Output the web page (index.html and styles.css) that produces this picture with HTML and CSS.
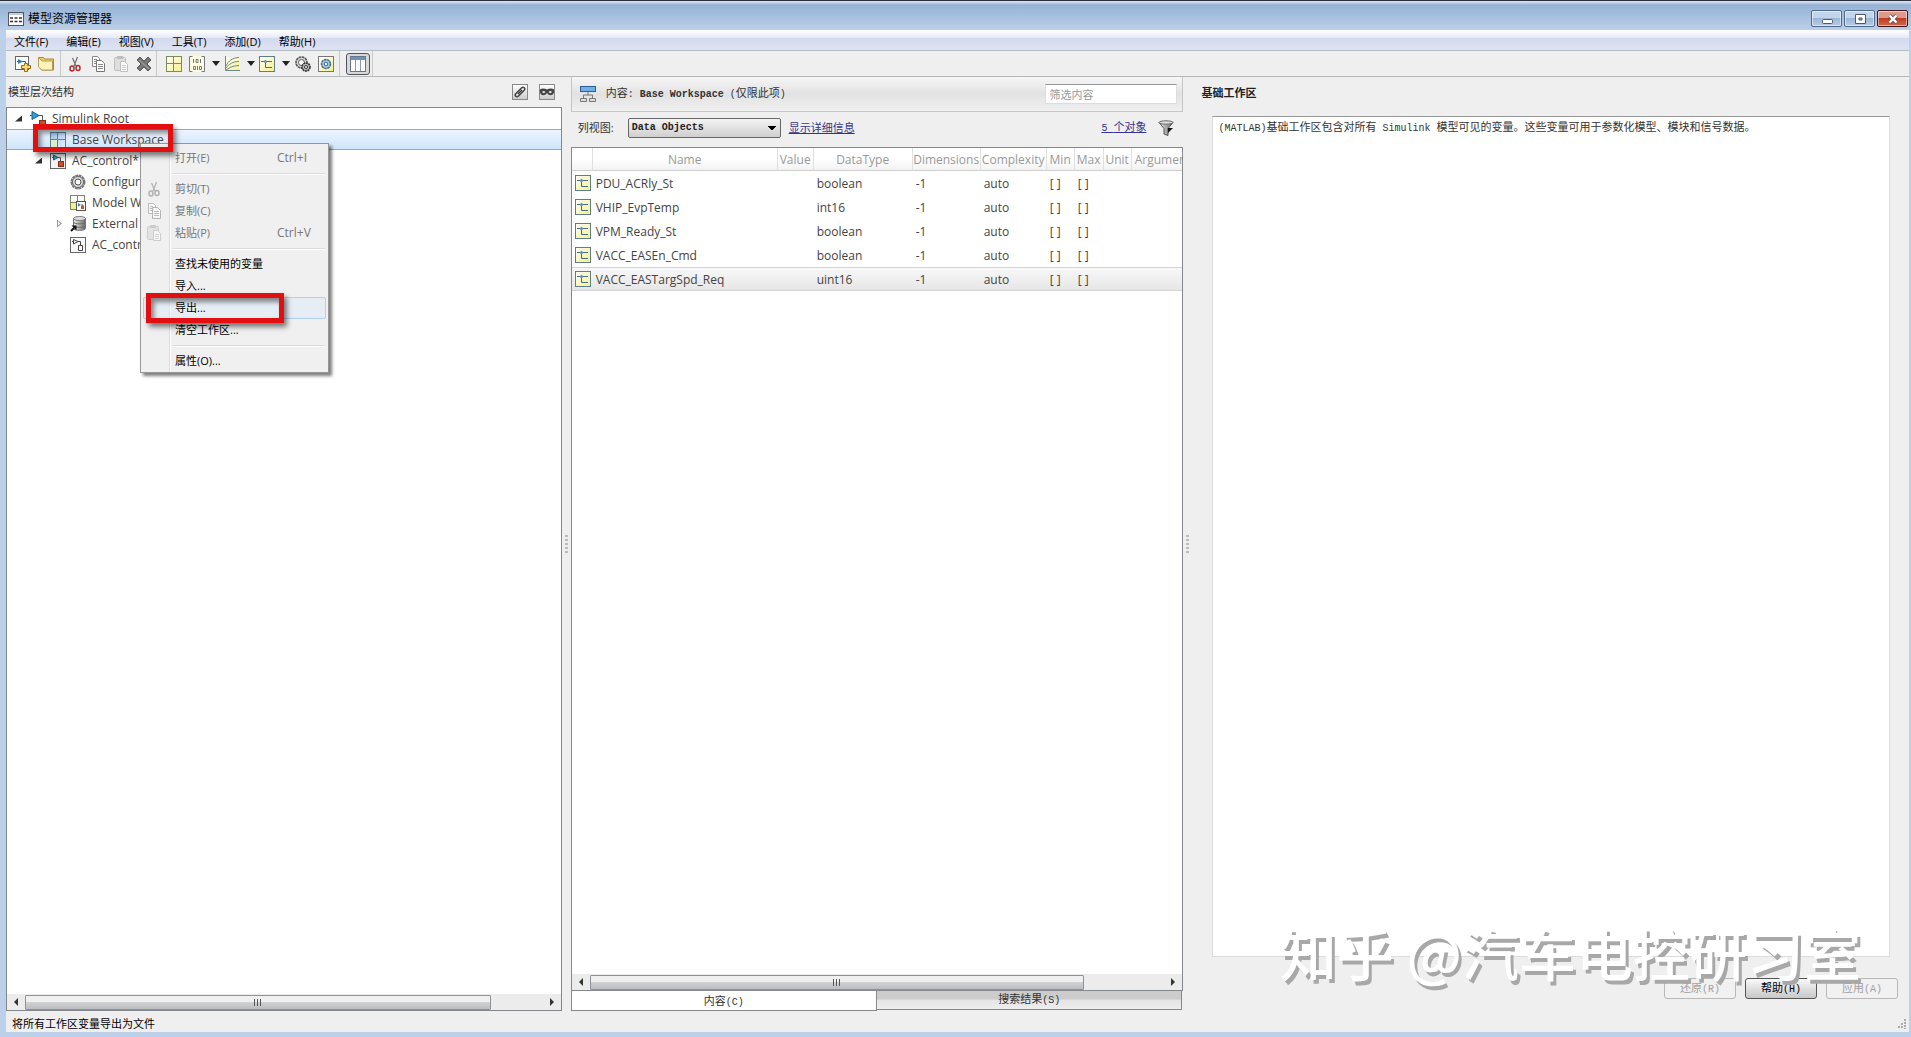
FILE: index.html
```html
<!DOCTYPE html>
<html lang="zh-CN">

<head>
    <meta charset="utf-8">
    <title>模型资源管理器</title>
    <link rel="stylesheet" href="styles.css">
</head>

<body>
    <svg class="defs">
        <defs>
            <linearGradient id="yellow" x1="0" y1="0" x2="1" y2="1">
                <stop offset="0" stop-color="#fff" />
                <stop offset="1" stop-color="#f6f08a" />
            </linearGradient>
            <linearGradient id="blue" x1="0" y1="0" x2="1" y2="1">
                <stop offset="0" stop-color="#9fc3ee" />
                <stop offset="1" stop-color="#e4f1ff" />
            </linearGradient>
            <linearGradient id="metal" x1="0" y1="0" x2="1" y2="0">
                <stop offset="0" stop-color="#eee" />
                <stop offset="1" stop-color="#666" />
            </linearGradient>
        </defs>
        <symbol id="i-cut" viewBox="0 0 16 16">
            <path d="M10.500 1L7 10M5.500 2L9 10" stroke="#777" stroke-width="1.300" fill="none" />
            <ellipse cx="5" cy="12.500" rx="2" ry="2.500" fill="none" stroke="currentColor" stroke-width="1.500" />
            <ellipse cx="11" cy="12" rx="2" ry="2.500" fill="none" stroke="currentColor" stroke-width="1.500" />
        </symbol>
        <symbol id="i-copy" viewBox="0 0 16 16">
            <path d="M2.500 .5h5l2 2v8h-7z" fill="#fff" stroke="#888" />
            <path d="M6.500 4.500h5l3 3v8h-8z" fill="#fff" stroke="#777" />
            <path d="M4 3.500h3M4 5.500h2M4 7.500h2M8 8.500h5M8 10.500h5M8 12.500h5" stroke="#888" />
        </symbol>
        <symbol id="i-paste" viewBox="0 0 16 16">
            <rect x="1.500" y="1.500" width="11" height="13" rx="1" fill="#d8d8d8" stroke="#aaa" />
            <rect x="4" y="0" width="6" height="3" fill="#aaa" />
            <path d="M7.500 5.500h4l3 3v7h-7z" fill="#fff" stroke="#aaa" />
            <path d="M9 9.500h4M9 11.500h4M9 13.500h4" stroke="#bbb" />
        </symbol>
        <symbol id="i-signal" viewBox="0 0 16 16">
            <rect x=".5" y=".5" width="15" height="15" fill="url(#yellow)" stroke="#5f7f86" />
            <path d="M2 5.500h11M6.500 5.500v6H13" stroke="#456b85" fill="none" />
            <circle cx="6.500" cy="5.500" r="1.500" fill="#6993b5" />
        </symbol>
        <symbol id="i-gear" viewBox="0 0 16 16">
            <circle cx="8" cy="8" r="6.500" fill="none" stroke="#777" stroke-width="2" stroke-dasharray="2.800 .6" />
            <circle cx="8" cy="8" r="5.500" fill="#ddd" stroke="#666" />
            <circle cx="8" cy="8" r="3" fill="#fff" stroke="#555" />
        </symbol>
        <symbol id="i-grid" viewBox="0 0 16 16">
            <rect x=".5" y=".5" width="15" height="15" fill="url(#yellow)" stroke="#7c8b62" />
            <path d="M7.500 1v14M1 7.500h14" stroke="#7c8b62" />
        </symbol>
        <symbol id="i-root" viewBox="0 0 16 16">
            <path d="M0 4.500h12.500v5" stroke="#555" fill="none" />
            <path d="M2 .5L9 4.500 2 8.500z" fill="#2e9fd8" stroke="#1d5f8a" />
            <rect x="9.500" y="9.500" width="6" height="6" fill="#c9502f" stroke="#8c2f18" />
        </symbol>
        <symbol id="i-model" viewBox="0 0 16 16">
            <rect x=".5" y=".5" width="15" height="15" fill="#f4f4f4" stroke="#666" />
            <path d="M2 4.500h8.500v4" stroke="#555" fill="none" />
            <path d="M3.500 2L8 4.500 3.500 7z" fill="#2e9fd8" stroke="#1d5f8a" />
            <rect x="8.500" y="8.500" width="5" height="5" fill="#c9502f" stroke="#8c2f18" />
        </symbol>
    </svg>

    <header class="title-bar">
        <svg class="icon" viewBox="0 0 16 16">
            <rect x=".5" y="1.500" width="15" height="13" fill="#fff" stroke="#556" />
            <path d="M1 3h14" stroke="#bcd" stroke-width="2" />
            <path d="M2 7h12M2 10.500h12" stroke="#333" stroke-width="1.500" stroke-dasharray="3 1.500" />
        </svg>
        <h1>模型资源管理器</h1>
        <div class="win-buttons">
            <button type="button" aria-label="最小化">
                <svg viewBox="0 0 16 12"><rect x="3.500" y="6.500" width="10" height="4" rx="1" fill="#fff" stroke="#556" /></svg>
            </button>
            <button type="button" aria-label="最大化">
                <svg viewBox="0 0 16 12"><path d="M3.500 1.500h10v9h-10zM7 5v2h3v-2z" fill="#fff" fill-rule="evenodd" stroke="#556" /></svg>
            </button>
            <button type="button" class="close" aria-label="关闭">
                <svg viewBox="0 0 16 12"><path d="M4.500 2.500l7 7M11.500 2.500l-7 7" stroke="#655" stroke-width="4" /><path d="M4.500 2.500l7 7M11.500 2.500l-7 7" stroke="#fff" stroke-width="2.400" /></svg>
            </button>
        </div>
    </header>

    <div class="window">
        <nav class="menu-bar">
            <a href="#">文件(F)</a>
            <a href="#">编辑(E)</a>
            <a href="#">视图(V)</a>
            <a href="#">工具(T)</a>
            <a href="#">添加(D)</a>
            <a href="#">帮助(H)</a>
        </nav>

        <div class="toolbar">
            <div class="tool-group">
                <button type="button" aria-label="新建模型">
                    <svg class="icon" viewBox="0 0 16 16">
                        <rect x=".5" y=".5" width="13" height="13" fill="#fff" stroke="#666" />
                        <path d="M2 5.500h8.500v3" stroke="#456" fill="none" />
                        <path d="M3 3l5 2.500L3 8z" fill="#2e7fb8" />
                        <path d="M9.500 7.500h3v2h3v3h-3v3h-3v-3h-3v-3h3z" fill="#ffdf6b" stroke="#a4661c" />
                    </svg>
                </button>
                <button type="button" aria-label="打开">
                    <svg class="icon" viewBox="0 0 16 16">
                        <path d="M.5 1.500h5l1 1.500h9v11h-12z" fill="#f5c95a" stroke="#a98a4a" />
                        <path d="M.5 1.500L4 5h10.500v9H4L.5 11z" fill="#fff5bd" stroke="#b79a58" />
                    </svg>
                </button>
            </div>
            <div class="tool-group edit">
                <button type="button" class="red" aria-label="剪切"><svg class="icon"><use href="#i-cut" /></svg></button>
                <button type="button" aria-label="复制"><svg class="icon"><use href="#i-copy" /></svg></button>
                <button type="button" aria-label="粘贴" disabled><svg class="icon"><use href="#i-paste" /></svg></button>
                <button type="button" aria-label="删除">
                    <svg class="icon" viewBox="0 0 16 16">
                        <path d="M1 4l3-3 4 4 4-4 3 3-4 4 4 4-3 3-4-4-4 4-3-3 4-4z" fill="#777" stroke="#555" />
                        <path d="M3 4l10 9" stroke="#aaa" />
                    </svg>
                </button>
            </div>
            <div class="tool-group add">
                <button type="button" aria-label="添加变量"><svg class="icon"><use href="#i-grid" /></svg></button>
                <button type="button" class="drop" aria-label="添加参数">
                    <svg class="icon" viewBox="0 0 16 16">
                        <rect width="16" height="16" fill="#fffde0" />
                        <path d="M3.500.5h-3v15h3M12.500.5h3v15h-3" fill="none" stroke="#778" />
                        <path d="M4.500 3v4M11.500 3v4M7 3.500h2v3H7zM8.500 10v4M4.500 10.500h2v3h-2zM10.500 10.500h2v3h-2z" fill="none" stroke="#777" />
                    </svg>
                </button>
                <button type="button" class="drop" aria-label="添加查找表">
                    <svg class="icon" viewBox="0 0 16 16">
                        <path d="M1 1h14v14H1z" fill="url(#yellow)" />
                        <path d="M1.500 0v14.500H16M2 10C4 5 9 1.500 15 1.500M2 12C5 8 9 5.500 15 5.500M2 14C6 11 10 9.500 15 9.500" fill="none" stroke="#6c868e" />
                    </svg>
                </button>
                <button type="button" class="drop" aria-label="添加信号"><svg class="icon"><use href="#i-signal" /></svg></button>
                <button type="button" class="gears" aria-label="配置集">
                    <svg class="icon" viewBox="0 0 16 16">
                        <circle cx="6.500" cy="6.500" r="5.500" fill="#ddd" stroke="#555" stroke-width="1.600" stroke-dasharray="2.600 .6" />
                        <circle cx="6.500" cy="6.500" r="3" fill="#fff" stroke="#555" />
                        <circle cx="11" cy="11" r="4" fill="#bbb" stroke="#333" stroke-width="1.600" stroke-dasharray="2 .6" />
                        <circle cx="11" cy="11" r="1.500" fill="#fff" stroke="#333" />
                    </svg>
                </button>
                <button type="button" aria-label="配置引用">
                    <svg class="icon" viewBox="0 0 16 16">
                        <rect x=".5" y=".5" width="15" height="15" fill="url(#yellow)" stroke="#777" />
                        <circle cx="8" cy="8" r="4.500" fill="#a9cdea" stroke="#3c6a8c" stroke-width="1.500" stroke-dasharray="2.500 .6" />
                        <circle cx="8" cy="8" r="1.800" fill="#fff" stroke="#3c6a8c" />
                    </svg>
                </button>
            </div>
            <div class="tool-group">
                <button type="button" class="pressed" aria-label="对话框视图">
                    <svg class="icon" viewBox="0 0 16 16">
                        <rect x=".5" y=".5" width="15" height="15" fill="#fff" stroke="#678" />
                        <rect x="1" y="1" width="14" height="3" fill="#6d93b8" />
                        <path d="M5.500 4v11M10.500 4v11" stroke="#89a" />
                    </svg>
                </button>
            </div>
        </div>

        <main class="panes">
            <section class="pane hierarchy">
                <div class="pane-head">
                    <h2>模型层次结构</h2>
                    <button type="button" class="square" aria-label="显示链接">
                        <svg viewBox="0 0 14 14"><path d="M5 9l4-4M6 5.500L3 8.500c-2 2 .5 4.500 2.500 2.500L8 8.500M6 5.500L8.500 3C10.500 1 13 3.500 11 5.500L8 8.500" fill="none" stroke="#444" stroke-width="1.500" /></svg>
                    </button>
                    <button type="button" class="square" aria-label="显示屏蔽">
                        <svg viewBox="0 0 14 14"><path d="M0 4.500C2 3 5 3.500 7 4.500 9 3.500 12 3 14 4.500v3C13 11 9 11 7 8 5 11 1 11 0 7.500zM2 7c1 1.500 2.500 1.500 3.500 0-1-1.300-2.500-1.300-3.500 0zM8.500 7c1 1.500 2.500 1.500 3.500 0-1-1.300-2.500-1.300-3.500 0z" fill="#444" fill-rule="evenodd" /></svg>
                    </button>
                </div>
                <div class="frame">
                    <ul class="tree">
                        <li><i class="twist open"></i><svg class="icon"><use href="#i-root" /></svg>Simulink Root</li>
                        <li class="level-1 selected"><i class="twist"></i>
                            <svg class="icon" viewBox="0 0 16 16">
                                <rect x=".5" y=".5" width="15" height="15" fill="url(#blue)" stroke="#5b8295" />
                                <path d="M1 8h7v7H1z" fill="#d8efc8" />
                                <path d="M7.500 1v14M1 7.500h14" stroke="#5b8295" />
                            </svg>Base Workspace</li>
                        <li class="level-1"><i class="twist open"></i><svg class="icon"><use href="#i-model" /></svg>AC_control*</li>
                        <li class="level-2"><i class="twist"></i><svg class="icon"><use href="#i-gear" /></svg>Configurations</li>
                        <li class="level-2"><i class="twist"></i>
                            <svg class="icon" viewBox="0 0 16 16">
                                <rect x=".5" y=".5" width="14" height="14" fill="#fff" stroke="#7c8b62" />
                                <path d="M1 8h6v6H1z" fill="#f6f08a" />
                                <path d="M7.500 1v13M1 7.500h13" stroke="#7c8b62" />
                                <rect x="6.500" y="6.500" width="9" height="9" fill="#fff" stroke="#555" />
                                <path d="M8 8l3 2-3 1.500z" fill="#2e7fb8" />
                                <path d="M11 10h2v2" fill="none" stroke="#555" />
                                <rect x="11" y="11" width="3" height="3" fill="#c9502f" />
                            </svg>Model Workspace</li>
                        <li class="level-2"><i class="twist closed"></i>
                            <svg class="icon" viewBox="0 0 16 16">
                                <path d="M3.500 2.500v10c0 2.500 12 2.500 12 0v-10z" fill="url(#metal)" stroke="#777" />
                                <ellipse cx="9.500" cy="2.500" rx="6" ry="2" fill="#ddd" stroke="#777" />
                                <path d="M3.500 6c0 2.500 12 2.500 12 0M3.500 9.500c0 2.500 12 2.500 12 0" fill="none" stroke="#666" />
                                <path d="M1 15l3-3" stroke="#111" stroke-width="2" />
                                <path d="M1.500 9.500h5v5z" fill="#111" />
                            </svg>External Data</li>
                        <li class="level-2"><i class="twist"></i>
                            <svg class="icon" viewBox="0 0 16 16">
                                <rect x=".5" y=".5" width="15" height="15" fill="#fafafa" stroke="#666" />
                                <path d="M2 4.500h2M8 4.500h2.500v4M3.500 2.500L8 4.500l-4.500 2.500zM8.500 8.500h4v5h-4z" fill="none" stroke="#444" />
                            </svg>AC_control</li>
                    </ul>
                    <div class="scrollbar">
                        <i class="arrow prev"></i>
                        <div class="track"><div class="thumb wide"></div></div>
                        <i class="arrow next"></i>
                    </div>
                </div>
            </section>

            <div class="splitter"></div>

            <section class="pane contents">
                <div class="content-head">
                    <svg class="icon" viewBox="0 0 16 16">
                        <rect x=".5" y=".5" width="15" height="5" fill="#6db0ea" stroke="#2d5f92" />
                        <path d="M8 6v3M3.500 12V9h9v3" fill="none" stroke="#777" />
                        <path d="M.5 12.500h6v3h-6zM9.500 12.500h6v3h-6z" fill="#ddd" stroke="#777" />
                    </svg>
                    <h2>内容<span class="mono">: <b>Base Workspace</b> (</span>仅限此项<span class="mono">)</span></h2>
                    <input type="search" placeholder="筛选内容" aria-label="筛选内容">
                </div>
                <div class="view-row">
                    <label for="view">列视图:</label>
                    <select id="view">
                        <option>Data Objects</option>
                    </select>
                    <a href="#">显示详细信息</a>
                    <a href="#" class="count"><span class="mono">5 </span>个对象</a>
                    <button type="button" class="filter" aria-label="筛选器">
                        <svg class="icon" viewBox="0 0 16 16">
                            <path d="M1 2.500l5 6V14l4 1.500v-7l5-6z" fill="url(#metal)" stroke="#555" />
                            <ellipse cx="8" cy="2.500" rx="7" ry="1.700" fill="#ddd" stroke="#666" />
                            <path d="M10 8h5l-5 5z" fill="#111" />
                        </svg>
                    </button>
                </div>
                <div class="frame list">
                    <div class="table-wrap">
                        <table>
                            <colgroup>
                                <col class="c-icon"><col class="c-name"><col class="c-value"><col class="c-type"><col class="c-dim"><col class="c-cplx"><col class="c-min"><col class="c-max"><col class="c-unit"><col class="c-arg">
                            </colgroup>
                            <thead>
                                <tr><th></th><th>Name</th><th>Value</th><th>DataType</th><th>Dimensions</th><th>Complexity</th><th>Min</th><th>Max</th><th>Unit</th><th>Argument</th></tr>
                            </thead>
                            <tbody>
                                <tr><td><svg class="icon"><use href="#i-signal" /></svg></td><td>PDU_ACRly_St</td><td></td><td>boolean</td><td>-1</td><td>auto</td><td>[ ]</td><td>[ ]</td><td></td><td></td></tr>
                                <tr><td><svg class="icon"><use href="#i-signal" /></svg></td><td>VHIP_EvpTemp</td><td></td><td>int16</td><td>-1</td><td>auto</td><td>[ ]</td><td>[ ]</td><td></td><td></td></tr>
                                <tr><td><svg class="icon"><use href="#i-signal" /></svg></td><td>VPM_Ready_St</td><td></td><td>boolean</td><td>-1</td><td>auto</td><td>[ ]</td><td>[ ]</td><td></td><td></td></tr>
                                <tr><td><svg class="icon"><use href="#i-signal" /></svg></td><td>VACC_EASEn_Cmd</td><td></td><td>boolean</td><td>-1</td><td>auto</td><td>[ ]</td><td>[ ]</td><td></td><td></td></tr>
                                <tr class="selected"><td><svg class="icon"><use href="#i-signal" /></svg></td><td>VACC_EASTargSpd_Req</td><td></td><td>uint16</td><td>-1</td><td>auto</td><td>[ ]</td><td>[ ]</td><td></td><td></td></tr>
                            </tbody>
                        </table>
                    </div>
                    <div class="scrollbar">
                        <i class="arrow prev"></i>
                        <div class="track"><div class="thumb"></div></div>
                        <i class="arrow next"></i>
                    </div>
                </div>
                <div class="tabs">
                    <button type="button" class="active">内容<span class="mono">(C)</span></button>
                    <button type="button">搜索结果<span class="mono">(S)</span></button>
                </div>
            </section>

            <div class="splitter"></div>

            <section class="pane details">
                <h2>基础工作区</h2>
                <div class="description">
                    <p><span class="mono">(MATLAB)</span>基础工作区包含对所有<span class="mono"> Simulink </span>模型可见的变量。这些变量可用于参数化模型、模块和信号数据。</p>
                </div>
                <div class="actions">
                    <button type="button" disabled>还原<span class="mono">(R)</span></button>
                    <button type="button">帮助<span class="mono">(H)</span></button>
                    <button type="button" disabled>应用<span class="mono">(A)</span></button>
                </div>
            </section>
        </main>

        <footer class="status-bar">
            <span>将所有工作区变量导出为文件</span>
            <svg class="grip" viewBox="0 0 10 10"><path d="M8 0v10M5 4v6M2 7v3" stroke="#aaa" stroke-width="2" stroke-dasharray="2 1" /></svg>
        </footer>
    </div>

    <!-- 右键菜单 -->
    <div class="context-menu">
        <button type="button" disabled>打开(E)<kbd>Ctrl+I</kbd></button>
        <hr>
        <button type="button" disabled><svg class="icon"><use href="#i-cut" /></svg>剪切(T)</button>
        <button type="button" disabled><svg class="icon"><use href="#i-copy" /></svg>复制(C)</button>
        <button type="button" disabled><svg class="icon"><use href="#i-paste" /></svg>粘贴(P)<kbd>Ctrl+V</kbd></button>
        <hr>
        <button type="button">查找未使用的变量</button>
        <button type="button">导入...</button>
        <button type="button" class="hover">导出...</button>
        <button type="button">清空工作区...</button>
        <hr>
        <button type="button">属性(O)...</button>
    </div>

    <!-- 标注框和水印 -->
    <div class="mark mark-workspace"></div>
    <div class="mark mark-export"></div>
    <div class="watermark">知乎 @汽车电控研习室</div>
</body>

</html>
```

FILE: styles.css
```css
* {
    margin: 0;
    padding: 0;
    box-sizing: border-box;
}

body {
    height: 100vh;
    position: relative;
    display: flex;
    flex-direction: column;
    padding: 0 2px 5px 6px;
    overflow: hidden;
    background-color: #bdd0ea;
    font: 12px/16px "Open Sans", "Noto Sans CJK SC", sans-serif;
    color: #000;
}

button,
input,
select {
    font: inherit;
    color: inherit;
}

button {
    border: none;
    background: none;
}

h1,
h2 {
    font-size: 12px;
    font-weight: normal;
}

h2 {
    font-size: 11px;
    color: #333;
}

ul {
    list-style-type: none;
}

.defs {
    position: absolute;
    width: 0;
    height: 0;
}

.icon {
    width: 16px;
    height: 16px;
    flex: none;
    display: block;
}

.mono {
    font-family: "Liberation Mono", "Noto Sans CJK SC", monospace;
    font-size: 10px;
    white-space: pre;
}

/* title bar */
.title-bar {
    height: 30px;
    flex: none;
    display: flex;
    align-items: center;
    gap: 4px;
    margin: 0 -2px 0 -6px;
    padding: 6px 3px 0 8px;
    border-top: 1px solid #2a2f3c;
    background: linear-gradient(#dfe9f5, #97b3d4 4px, #a9c2e0 60%, #bccfe8);
}

.win-buttons {
    margin-left: auto;
    display: flex;
    gap: 2px;
}

.win-buttons button {
    width: 31px;
    height: 17px;
    display: flex;
    align-items: center;
    justify-content: center;
    border: 1px solid #4f6a8c;
    border-radius: 2px;
    box-shadow: inset 0 0 0 1px rgba(255, 255, 255, 0.5);
    background: linear-gradient(#c3d5ea 50%, #9cb7d6 50%, #b5cce6);
}

.win-buttons svg {
    width: 16px;
    height: 12px;
}

.win-buttons .close {
    border-color: #43141b;
    background: linear-gradient(#dd9b8c 50%, #bf3d22 50%, #d4694c);
}

.window {
    flex: 1;
    min-height: 0;
    display: flex;
    flex-direction: column;
    background-color: #efefef;
}

/* menu and toolbar */
.menu-bar {
    height: 21px;
    flex: none;
    display: flex;
    gap: 18px;
    padding: 4px 8px 0;
    border-bottom: 1px solid #b4bcc4;
    background: linear-gradient(#fff, #e6e9f6 40%, #d4daee 41%, #dde2f3);
    font-size: 11px;
}

.menu-bar a {
    color: #000;
    text-decoration: none;
}

.toolbar {
    height: 26px;
    flex: none;
    display: flex;
    border-bottom: 1px solid #b4b8bb;
}

.tool-group {
    display: flex;
    align-items: center;
    gap: 7px;
    padding: 0 6px 0 9px;
    border-right: 1px solid #c8c8c8;
}

.tool-group.edit {
    padding: 0 4px 0 6px;
}

.tool-group.add {
    padding: 0 5px 0 9px;
}

.tool-group:last-child {
    padding: 0 2px 0 6px;
}

.tool-group .red {
    color: #b03030;
}

.tool-group button:disabled {
    opacity: 0.7;
}

.drop {
    display: flex;
    align-items: center;
    gap: 7px;
}

.drop::after {
    content: "";
    border: 4px solid transparent;
    border-top: 5px solid #222;
    border-bottom: none;
}

.tool-group .drop {
    margin-right: -3px;
}

.tool-group .gears {
    margin-left: 1px;
}

.tool-group .pressed {
    padding: 2px 3px;
    border: 1px solid #555;
    border-radius: 3px;
    background-color: #d8d8d8;
}

/* panes */
.panes {
    flex: 1;
    min-height: 0;
    display: grid;
    grid-template-columns: 29.2% 9px 32.2% 9px 1fr;
}

.pane {
    min-width: 0;
    min-height: 0;
    display: flex;
    flex-direction: column;
}

.splitter {
    align-self: center;
    justify-self: center;
    width: 3px;
    height: 18px;
    background: repeating-linear-gradient(#bbb 0 2px, transparent 2px 4px);
}

.pane-head {
    height: 30px;
    flex: none;
    display: flex;
    align-items: center;
    gap: 11px;
    padding: 0 7px 0 2px;
}

.pane-head h2 {
    flex: 1;
}

.square {
    width: 16px;
    height: 16px;
    border: 1px solid #888;
    background: linear-gradient(#fff, #ccc);
}

.square svg {
    width: 14px;
    height: 14px;
    display: block;
}

.frame {
    flex: 1;
    min-height: 0;
    display: flex;
    flex-direction: column;
    border: 1px solid #84888d;
    background-color: #fff;
}

/* tree */
.tree {
    flex: 1;
    color: #444;
}

.tree li {
    height: 21px;
    display: flex;
    align-items: center;
    gap: 6px;
    padding-left: 7px;
    border: 1px solid transparent;
    border-width: 1px 0;
}

.tree .level-1 {
    padding-left: 27px;
}

.tree .level-2 {
    padding-left: 47px;
}

.tree .selected {
    border-color: #86aecb;
    background: linear-gradient(#ecf5ff, #cfe5fc);
}

.twist {
    width: 10px;
    height: 8px;
}

.twist.open {
    height: 6px;
    background-color: #333;
    clip-path: polygon(80% 0, 80% 100%, 10% 100%);
}

.twist.closed {
    background-color: #999;
    clip-path: polygon(30% 0, 80% 50%, 30% 100%, 30% 85%, 62% 50%, 40% 20%, 40% 90%, 30% 100%);
}

/* scrollbars */
.scrollbar {
    height: 16px;
    flex: none;
    display: flex;
    align-items: center;
    background-color: #ececec;
}

.arrow {
    width: 18px;
    display: flex;
    justify-content: center;
}

.arrow::before {
    content: "";
    border: 4px solid transparent;
}

.arrow.prev::before {
    border-right-color: #333;
    border-left: none;
}

.arrow.next::before {
    border-left-color: #333;
    border-right: none;
}

.track {
    flex: 1;
}

.thumb {
    width: 86%;
    height: 15px;
    border: 1px solid #8e9196;
    border-radius: 1px;
    background:
        repeating-linear-gradient(90deg, #555 0 1px, transparent 1px 3px) center / 8px 7px no-repeat,
        linear-gradient(#f0f0f0 45%, #d0d1d3 50%, #bcbdc0);
}

.thumb.wide {
    width: 90%;
}

/* contents pane */
.content-head {
    height: 35px;
    flex: none;
    display: flex;
    align-items: center;
    gap: 10px;
    padding: 0 5px 0 8px;
    border: 1px solid #c6c6c6;
    border-top: none;
    background: linear-gradient(#f6f6f6, #e2e2e2 50%, #f0f0f0);
}

.content-head h2 {
    flex: 1;
}

.content-head input {
    width: 132px;
    height: 20px;
    padding: 0 3px;
    border: 1px solid #ddd;
    border-top-color: #999;
    background-color: #fff;
    font-size: 11px;
}

.content-head input::placeholder {
    color: #999;
}

.view-row {
    height: 35px;
    flex: none;
    display: flex;
    align-items: center;
    padding: 0 9px 4px 7px;
    font-size: 11px;
}

.view-row label {
    width: 50px;
    color: #333;
}

.view-row select {
    width: 153px;
    height: 20px;
    margin-right: 8px;
    padding: 0 3px;
    appearance: none;
    border: 1px solid #666;
    border-radius: 2px;
    background:
        conic-gradient(from -45deg at 50% 100%, #000 0 90deg, transparent 0) right 4px center / 8px 4px no-repeat,
        linear-gradient(#f4f4f4, #cfcfcf);
    font: bold 10px "Liberation Mono", monospace;
    color: #222;
}

.view-row a {
    color: #34348e;
}

.view-row .count {
    margin-left: auto;
    margin-right: 12px;
}

.list {
    flex: 1;
}

.table-wrap {
    flex: 1;
    overflow: hidden;
}

table {
    width: 660px;
    table-layout: fixed;
    border-collapse: separate;
    border-spacing: 0;
    color: #444;
}

.c-icon { width: 21px; }
.c-name { width: 185px; }
.c-value { width: 36px; }
.c-type { width: 99px; }
.c-dim { width: 68px; }
.c-cplx { width: 66px; }
.c-min { width: 28px; }
.c-max { width: 29px; }
.c-unit { width: 28px; }

th {
    height: 23px;
    padding-top: 2px;
    border-right: 1px solid #e0e0e0;
    border-bottom: 1px solid #d0d0d0;
    background: linear-gradient(#fff 50%, #f2f2f2);
    font-weight: normal;
    color: #999;
}

th:last-child {
    padding-left: 3px;
    text-align: left;
}

td {
    height: 24px;
    padding: 2px 0 0 3px;
    border: 1px solid transparent;
    border-width: 1px 0;
    white-space: nowrap;
}

td:first-child {
    padding-top: 0;
}

.selected td {
    border-color: #d4d4d4;
    background: linear-gradient(#f8f8f8, #e6e6e6);
}

.tabs {
    height: 20px;
    flex: none;
    display: flex;
    align-items: flex-start;
    padding-right: 1px;
    font-size: 11px;
    color: #333;
}

.tabs button {
    flex: 1;
    height: 19px;
    border: 1px solid #888;
    border-top: none;
    border-left: none;
    background: linear-gradient(#ccc 45%, #e4e4e4 50%, #eee);
}

.tabs .active {
    flex-basis: 2px;
    height: 20px;
    padding-top: 2px;
    border-left: 1px solid #888;
    background: #fff;
}

/* details pane */
.details {
    padding: 6px 11px 12px 9px;
    font-size: 11px;
}

.details h2 {
    font-weight: bold;
    line-height: 20px;
    color: #222;
}

.description {
    flex: 1;
    margin: 13px 8px 0 11px;
    padding: 2px 5px;
    border: 1px solid #dcdcdc;
    border-top-color: #999;
    background-color: #fff;
    color: #333;
}

.actions {
    display: flex;
    justify-content: flex-end;
    gap: 9px;
    padding-top: 21px;
}

.actions button {
    width: 72px;
    height: 21px;
    border: 1px solid #555;
    border-radius: 3px;
    background: linear-gradient(#fafafa, #e0e0e0 50%, #c8c8c8);
}

.actions button:disabled {
    border-color: #b8b8b8;
    background: #f1f1f1;
    color: #a0a0a0;
}

.status-bar {
    height: 21px;
    flex: none;
    display: flex;
    align-items: center;
    justify-content: space-between;
    padding: 4px 2px 0 6px;
    font-size: 11px;
}

.grip {
    width: 10px;
    height: 10px;
}

/* context menu */
.context-menu {
    position: absolute;
    left: 140px;
    top: 143px;
    width: 189px;
    padding: 3px 2px 0;
    border: 1px solid #979797;
    box-shadow: 3px 3px 3px rgba(0, 0, 0, 0.5);
    background: linear-gradient(90deg, transparent 28px, #ddd 28px 29px, #fff 29px 30px, transparent 30px) #f0f0f0;
    font-size: 11px;
}

.context-menu button {
    width: 100%;
    height: 22px;
    display: flex;
    align-items: center;
    position: relative;
    padding-left: 31px;
    border: 1px solid transparent;
    border-radius: 2px;
}

.context-menu button:disabled {
    color: #777;
}

.context-menu .icon {
    position: absolute;
    left: 2px;
    opacity: 0.5;
}

.context-menu kbd {
    width: 48px;
    margin-left: auto;
    text-align: left;
    font-family: inherit;
    font-size: 12px;
}

.context-menu .hover {
    border-color: #aecff0;
    background-color: rgba(222, 234, 250, 0.5);
}

.context-menu hr {
    height: 2px;
    margin: 4px 1px 3px 29px;
    border: none;
    border-top: 1px solid #dcdcdc;
    border-bottom: 1px solid #fff;
}

/* annotations */
.mark {
    position: absolute;
    border: 5px solid #e10f0f;
    box-shadow: 3px 4px 5px rgba(0, 0, 0, 0.5), inset 3px 4px 5px rgba(0, 0, 0, 0.45);
}

.mark-workspace {
    left: 33px;
    top: 124px;
    width: 140px;
    height: 28px;
}

.mark-export {
    left: 146px;
    top: 293px;
    width: 138px;
    height: 30px;
}

.watermark {
    position: absolute;
    right: 50px;
    bottom: 56px;
    font: 500 57px/60px "Noto Sans CJK SC", sans-serif;
    color: #fff;
    text-shadow: 3px 4px 0 #a8a8a8;
    white-space: nowrap;
}
```
